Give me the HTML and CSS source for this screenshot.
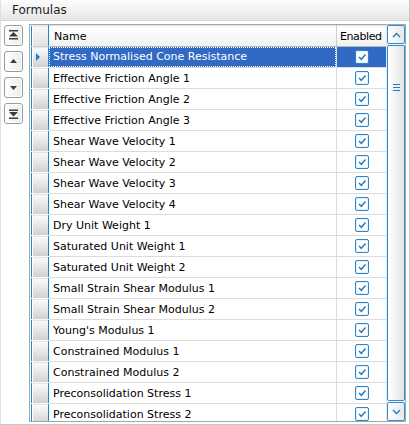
FILE: index.html
```html
<!DOCTYPE html>
<html lang="en">
<head>
    <meta charset="UTF-8">
    <title>Formulas</title>
    <link rel="stylesheet" href="styles.css">
</head>
<body>
    <div class="panel">
        <div class="title">Formulas</div>

        <div class="content">
            <div class="toolbar">
                <button class="tool" title="Move to top">
                    <svg width="11" height="11" viewBox="0 0 11 11"><rect x="1" y="0" width="9" height="1.5" fill="#3c3c3c"/><path d="M5.5 2 L10 6.5 H1 Z" fill="#3c3c3c"/><rect x="1" y="8" width="9" height="1.5" fill="#3c3c3c"/></svg>
                </button>
                <button class="tool" title="Move up">
                    <svg width="9" height="9" viewBox="0 0 9 9"><path d="M4.5 2 L8 6 H1 Z" fill="#3c3c3c"/></svg>
                </button>
                <button class="tool" title="Move down">
                    <svg width="9" height="9" viewBox="0 0 9 9"><path d="M1 3 H8 L4.5 7 Z" fill="#3c3c3c"/></svg>
                </button>
                <button class="tool" title="Move to bottom">
                    <svg width="11" height="11" viewBox="0 0 11 11"><rect x="1" y="1.5" width="9" height="1.5" fill="#3c3c3c"/><path d="M1 4 H10 L5.5 8.5 Z" fill="#3c3c3c"/><rect x="1" y="9.5" width="9" height="1.5" fill="#3c3c3c"/></svg>
                </button>
            </div>

            <div class="grid">
                <div class="table-wrap">
                    <table class="formulas">
                        <colgroup>
                            <col class="c-head">
                            <col class="c-name">
                            <col class="c-enabled">
                        </colgroup>
                        <thead>
                            <tr>
                                <th class="rowhead"></th>
                                <th class="name">Name</th>
                                <th class="enabled">Enabled</th>
                            </tr>
                        </thead>
                        <tbody id="rows"></tbody>
                    </table>
                </div>

                <div class="scrollbar">
                    <div class="sb-btn">
                        <svg width="9" height="6" viewBox="0 0 9 6"><path d="M1 5 L4.5 1.5 L8 5" fill="none" stroke="#1c7fc4" stroke-width="1.4"/></svg>
                    </div>
                    <div class="sb-thumb">
                        <span class="grip"></span>
                    </div>
                    <div class="sb-btn">
                        <svg width="9" height="6" viewBox="0 0 9 6"><path d="M1 1 L4.5 4.5 L8 1" fill="none" stroke="#1c7fc4" stroke-width="1.4"/></svg>
                    </div>
                </div>
            </div>
        </div>
    </div>

    <script>
        // lista das fórmulas da grade
        const formulas = [
            'Stress Normalised Cone Resistance',
            'Effective Friction Angle 1',
            'Effective Friction Angle 2',
            'Effective Friction Angle 3',
            'Shear Wave Velocity 1',
            'Shear Wave Velocity 2',
            'Shear Wave Velocity 3',
            'Shear Wave Velocity 4',
            'Dry Unit Weight 1',
            'Saturated Unit Weight 1',
            'Saturated Unit Weight 2',
            'Small Strain Shear Modulus 1',
            'Small Strain Shear Modulus 2',
            "Young's Modulus 1",
            'Constrained Modulus 1',
            'Constrained Modulus 2',
            'Preconsolidation Stress 1',
            'Preconsolidation Stress 2'
        ];

        const tbody = document.getElementById('rows');
        formulas.forEach((nome, i) => {
            const tr = document.createElement('tr');
            if (i === 0) tr.className = 'selected';
            tr.innerHTML = `
                <td class="rowhead">${i === 0 ? '<span class="marker"></span>' : ''}</td>
                <td class="name"><span>${nome}</span></td>
                <td class="enabled"><span class="check"></span></td>
            `;
            tbody.appendChild(tr);
        });
    </script>
</body>
</html>
```

FILE: styles.css
```css
* {
    margin: 0;
    padding: 0;
    box-sizing: border-box;
}

body {
    background: #fff;
    font-family: 'DejaVu Sans', 'Liberation Sans', sans-serif;
    font-size: 11px;
    color: #000;
}

.panel {
    width: 410px;
    height: 425px;
    border-right: 1px solid #c9c9c9;
    border-bottom: 1px solid #c9c9c9;
    border-left: 1px solid #e2e2e2;
    display: flex;
    flex-direction: column;
    overflow: hidden;
}

.title {
    height: 21px;
    line-height: 20px;
    padding-left: 11px;
    background: linear-gradient(#fdfdfd, #e6e6e6);
    border-bottom: 1px solid #d4d4d4;
    font-size: 12px;
    color: #1e1e1e;
}

.content {
    flex: 1;
    display: flex;
    padding: 3px 3px 2px 3px;
    min-height: 0;
}

.toolbar {
    width: 19px;
    display: flex;
    flex-direction: column;
    gap: 5px;
    padding-top: 1px;
    margin-right: 6px;
}

.tool {
    width: 19px;
    height: 21px;
    border: 1px solid #9a9a9a;
    border-radius: 3px;
    background: linear-gradient(90deg, #ffffff, #ececec);
    box-shadow: inset 0 0 0 1px #fff;
    display: flex;
    align-items: center;
    justify-content: center;
}

.grid {
    flex: 1;
    display: flex;
    border: 1px solid #a5a5a5;
    min-height: 0;
    overflow: hidden;
}

.table-wrap {
    flex: 1;
    overflow: hidden;
    border-left: 1px solid #fff;
}

.formulas {
    table-layout: fixed;
    border-collapse: collapse;
    width: 355px;
}

.c-head { width: 17px; }
.c-name { width: 288px; }
.c-enabled { width: 50px; }

.formulas th,
.formulas td {
    height: 21px;
    padding: 0;
    white-space: nowrap;
    overflow: hidden;
    font-weight: normal;
    text-align: left;
}

.formulas th {
    background: linear-gradient(#ffffff, #f1f1f1);
    border-right: 1px solid #cfcfcf;
    border-bottom: 1px solid #b9b9b9;
    border-top: 1px solid #d8e8f4;
}

.formulas th.name { padding-left: 5px; }
.formulas th.enabled {
    padding-left: 3px;
    border-right: none;
    letter-spacing: -0.4px;
}

.formulas td {
    border-bottom: 1px solid #dcdcdc;
    border-right: 1px solid #dcdcdc;
}

.formulas td.name { padding-left: 4px; }
.formulas td.enabled { text-align: center; border-right: none; }

.formulas .rowhead {
    border-left: 1px solid #2186d0;
    border-right: 1px solid #2186d0;
    background: linear-gradient(#f7f7f7 10%, #e4e4e4 55%, #cfcfcf);
    border-bottom: 1px solid #fafafa;
    box-shadow: inset 1px 0 0 #fff;
    position: relative;
}

.formulas th.rowhead {
    background: linear-gradient(#f8f8f8, #e2e2e2);
    border-bottom: 1px solid #cfcfcf;
}

.marker {
    position: absolute;
    left: 4px;
    top: 6px;
    width: 0;
    height: 0;
    border-top: 4px solid transparent;
    border-bottom: 4px solid transparent;
    border-left: 4px solid #1e7fc8;
}

.selected td.name,
.selected td.enabled {
    background: #316ac5;
    color: #fff;
}

.selected td.name span {
    display: block;
    outline: 1px dotted #fff;
    outline-offset: -1px;
    margin-left: -4px;
    padding-left: 4px;
    line-height: 20px;
}

.check {
    display: inline-block;
    width: 14px;
    height: 14px;
    vertical-align: middle;
    border: 1px solid #2a86c8;
    border-radius: 2px;
    background: #fff url("data:image/svg+xml;utf8,<svg xmlns='http://www.w3.org/2000/svg' width='12' height='12'><path d='M3 6 L5.3 8.3 L9.5 3.5' fill='none' stroke='%231f7fc6' stroke-width='1.5'/></svg>") center no-repeat;
    box-shadow: inset 0 0 0 1px #e6f1fa;
}

.scrollbar {
    width: 19px;
    display: flex;
    flex-direction: column;
    background: #f3f3f3;
    border-left: 1px solid #e6e6e6;
}

.sb-btn {
    height: 19px;
    border: 1px solid #2a8fd6;
    border-radius: 2px;
    background: linear-gradient(90deg, #ffffff, #e9e9e9);
    display: flex;
    align-items: center;
    justify-content: center;
}

.sb-thumb {
    flex: 1;
    margin: 1px 0;
    border: 1px solid #2a8fd6;
    border-radius: 2px;
    background: linear-gradient(90deg, #ffffff, #e4e4e4);
    display: flex;
    justify-content: center;
    padding-top: 38px;
}

.grip {
    width: 7px;
    height: 7px;
    border-top: 1px solid #1c7fc4;
    border-bottom: 1px solid #1c7fc4;
    position: relative;
}

.grip::after {
    content: "";
    position: absolute;
    left: 0;
    right: 0;
    top: 2px;
    border-top: 1px solid #1c7fc4;
}
```
